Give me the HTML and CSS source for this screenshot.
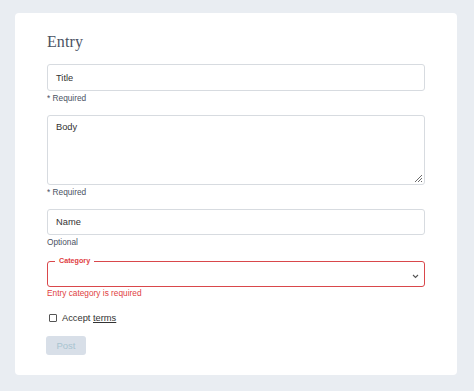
FILE: index.html
```html
<!DOCTYPE html>
<html>
<head>
<meta charset="utf-8">
<link rel="stylesheet" href="styles.css">
</head>
<body>
<div class="page">
  <form class="card">
    <h1 class="title">Entry</h1>
    <div class="field">
      <div class="input">Title</div>
      <div class="helper">* Required</div>
    </div>
    <div class="field">
      <div class="input textarea">Body
        <svg class="grip" width="9" height="9" viewBox="0 0 9 9"><path d="M8 1L1 8M8 4L4 8M8 7L7 8" stroke="#6b6b6b" stroke-width="1"/></svg>
      </div>
      <div class="helper">* Required</div>
    </div>
    <div class="field last">
      <div class="input">Name</div>
      <div class="helper">Optional</div>
    </div>
    <div class="field">
      <fieldset class="select">
        <legend>Category</legend>
        <svg class="chev" width="7" height="5" viewBox="0 0 7 5"><path d="M1 1L3.5 3.5L6 1" fill="none" stroke="#555" stroke-width="1.1"/></svg>
      </fieldset>
      <div class="helper error">Entry category is required</div>
    </div>
    <label class="check"><span class="box"></span><span>Accept <u>terms</u></span></label>
    <div class="actions"><span class="btn">Post</span></div>
  </form>
</div>
</body>
</html>
```
FILE: styles.css
```css
html, body { margin: 0; padding: 0; }
body {
  background: #e9edf2;
  font-family: "Liberation Sans", Arial, sans-serif;
  width: 474px;
  height: 391px;
}
.page {
  padding: 13px 17px 16px 15px;
}
.card {
  background: #fff;
  border-radius: 4px;
  padding: 20px 32px 20px 32px;
  display: flex;
  flex-direction: column;
  height: 362px;
  box-sizing: border-box;
}
.title {
  font-family: "Liberation Serif", "Times New Roman", serif;
  font-weight: normal;
  font-size: 16px;
  color: #4a5263;
  margin: 0 0 13px 0;
  line-height: 18px;
  letter-spacing: 0.1px;
}
.field { display: flex; flex-direction: column; margin-bottom: 12px; }
.field.last { margin-bottom: 10px; }
.input {
  height: 27px;
  box-sizing: border-box;
  border: 1px solid #d7dbe0;
  border-radius: 3px;
  padding: 0 8px;
  font-size: 9.3px;
  color: #333;
  display: flex;
  align-items: center;
}
.textarea {
  height: 70px;
  align-items: flex-start;
  padding-top: 6px;
  position: relative;
}
.field.last .input { height: 26px; }
.grip { position: absolute; right: 1px; bottom: 1px; }
.helper {
  font-size: 8.3px;
  color: #4a5263;
  line-height: 10px;
  margin-top: 2px;
}
.helper.error { color: #e0403f; margin-top: 1px; }
.select {
  margin: 0;
  height: 30px;
  box-sizing: border-box;
  border: 1px solid #d9474b;
  border-radius: 3px;
  padding: 0 8px 0 7px;
  position: relative;
}
.select legend {
  font-size: 7.2px;
  font-weight: bold;
  color: #e0403f;
  padding: 0 4px;
  margin-left: 0;
  line-height: 8px;
}
.chev { position: absolute; right: 5px; top: 9px; }
.check {
  display: flex;
  align-items: center;
  font-size: 9.3px;
  line-height: 12px;
  color: #333;
  margin-top: 2px;
  padding-left: 2px;
}
.box {
  width: 6px;
  height: 6px;
  border: 1px solid #555;
  border-radius: 1px;
  margin-right: 5px;
}
.actions { margin-top: 12px; display: flex; }
.btn {
  width: 40px;
  height: 19px;
  margin-left: -1px;
  background: #d8dfe8;
  border-radius: 3px;
  color: #a8c4d0;
  font-size: 9.5px;
  display: flex;
  align-items: center;
  justify-content: center;
}
```
